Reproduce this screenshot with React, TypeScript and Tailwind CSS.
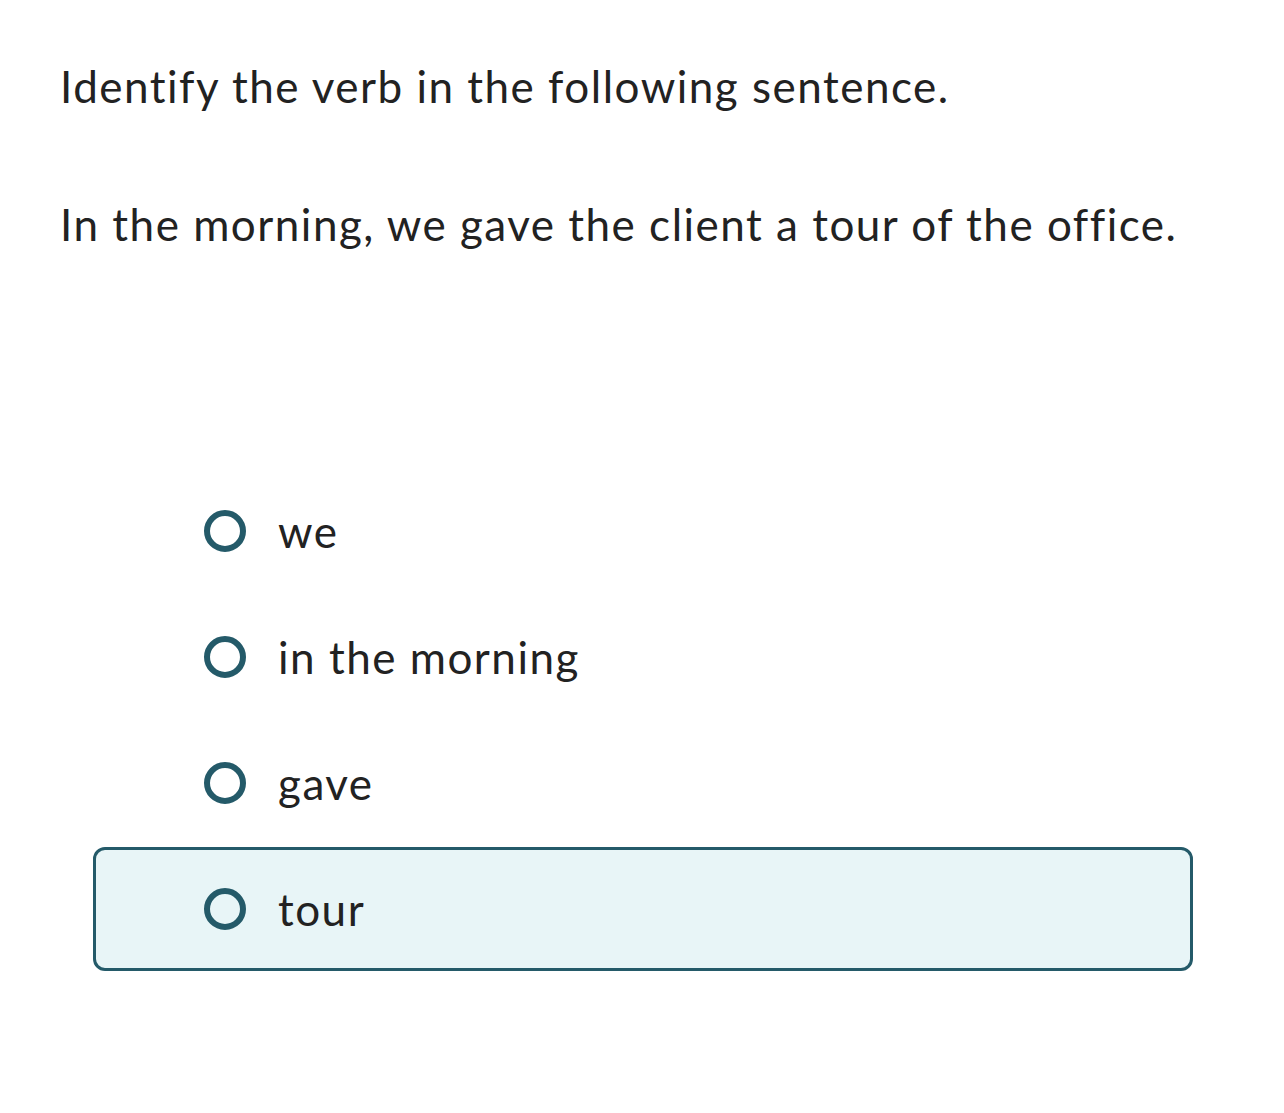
import React from "react";

const options = ["we", "in the morning", "gave", "tour"];

export default function App() {
  return (
    <div className="w-[1284px] h-[1113px] bg-white text-[#222222] tracking-[1.5px]" style={{ fontFamily: '"Lato", "Noto Sans", sans-serif' }}>
      <div className="px-[60px] pt-[58px]">
        <p className="text-[44px] leading-[56px]">Identify the verb in the following sentence.</p>
        <p className="text-[44px] leading-[56px] mt-[82px]">In the morning, we gave the client a tour of the office.</p>
      </div>
      <div className="mt-[217px] ml-[93px] w-[1100px] flex flex-col">
        {options.map((o, i) => (
          <div
            key={o}
            className={
              "h-[124px] flex items-center pl-[108px] rounded-[12px] border-[3px] " +
              (i === 3 ? "border-[#245a69] bg-[#e8f5f7]" : "border-transparent")
            }
            style={{ marginTop: i === 0 ? 0 : 2 }}
          >
            <span className="w-[42px] h-[42px] rounded-full border-[6px] border-[#245a69] shrink-0" />
            <span className="ml-[32px] text-[44px] leading-[56px]">{o}</span>
          </div>
        ))}
      </div>
    </div>
  );
}
